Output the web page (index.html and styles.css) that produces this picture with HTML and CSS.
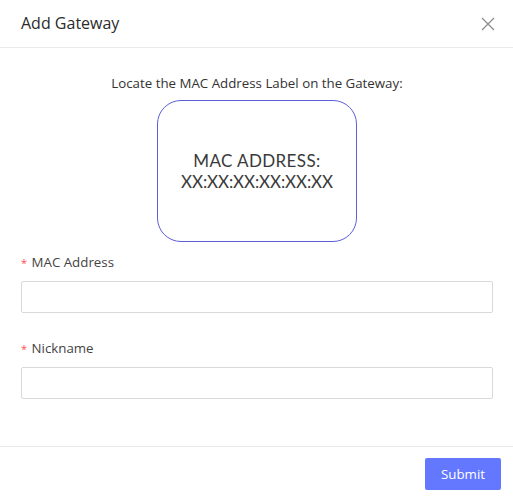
FILE: index.html
```html
<!DOCTYPE html>
<html lang="en">
<head>
    <meta charset="UTF-8">
    <meta name="viewport" content="width=device-width, initial-scale=1.0">
    <title>Add Gateway</title>
    <link rel="stylesheet" href="styles.css">
</head>
<body>

    <div class="modal">
        <div class="modal-header">
            <div class="modal-title">Add Gateway</div>
            <button class="close" aria-label="Close">
                <svg width="14" height="14" viewBox="0 0 14 14">
                    <path d="M1 1 L13 13 M13 1 L1 13" stroke="#888" stroke-width="1.1" fill="none"/>
                </svg>
            </button>
        </div>

        <div class="modal-body">
            <div class="hint">Locate the MAC Address Label on the Gateway:</div>
            <div class="mac-label">
                <div class="mac-title">MAC ADDRESS:</div>
                <div class="mac-value">XX:XX:XX:XX:XX:XX</div>
            </div>

            <div class="field">
                <label for="mac"><span class="req">*</span> MAC Address</label>
                <input type="text" id="mac">
            </div>
            <div class="field">
                <label for="nick"><span class="req">*</span> Nickname</label>
                <input type="text" id="nick">
            </div>
        </div>

        <div class="modal-footer">
            <button class="submit">Submit</button>
        </div>
    </div>

</body>
</html>
```

FILE: styles.css
```css
body {
    margin: 0;
    background-color: #fff;
    font-family: "Open Sans", "Noto Sans", sans-serif;
    color: #333;
}

.modal {
    width: 513px;
    height: 497px;
    display: flex;
    flex-direction: column;
    background-color: #fff;
}

.modal-header {
    height: 48px;
    box-sizing: border-box;
    border-bottom: 1px solid #eaeaea;
    padding: 0 18px 0 21px;
    display: flex;
    align-items: center;
    justify-content: space-between;
}

.modal-title {
    font-size: 16px;
    font-weight: 500;
    color: #2b2b2b;
    margin-top: -1px;
}

.close {
    border: none;
    background: none;
    padding: 0;
    width: 14px;
    height: 14px;
    cursor: pointer;
}

.modal-body {
    flex: 1;
    padding: 26px 20px 0 21px;
}

.hint {
    text-align: center;
    font-size: 13.3px;
    color: #333;
    line-height: 18px;
}

.mac-label {
    width: 200px;
    height: 142px;
    box-sizing: border-box;
    margin: 8px auto 0;
    border: 1.3px solid #5d5fd8;
    border-radius: 24px;
    display: flex;
    flex-direction: column;
    align-items: center;
    justify-content: center;
    font-family: Lato, "Noto Sans", sans-serif;
    font-size: 17px;
    color: #3a3a3a;
    line-height: 21px;
}

.mac-title {
    letter-spacing: 0.4px;
}

.mac-value {
    letter-spacing: -0.1px;
}

.field {
    margin-top: 11px;
}

.field + .field {
    margin-top: 26px;
}

.field label {
    display: block;
    font-size: 13.3px;
    color: #444;
    line-height: 18px;
    margin-bottom: 9px;
}

.req {
    color: #ff4d4f;
    font-size: 11px;
    margin-right: 1px;
}

.field input {
    display: block;
    width: 100%;
    height: 32px;
    box-sizing: border-box;
    border: 1px solid #d9d9d9;
    border-radius: 2px;
    outline: none;
    font-size: 13px;
    padding: 4px 10px;
}

.modal-footer {
    height: 50px;
    border-top: 1px solid #eaeaea;
    display: flex;
    justify-content: flex-end;
    align-items: center;
    padding-right: 12px;
}

.submit {
    width: 76px;
    height: 32px;
    border: none;
    border-radius: 2px;
    background-color: #6478ff;
    color: #fff;
    font-family: "Open Sans", "Noto Sans", sans-serif;
    font-size: 13.3px;
    cursor: pointer;
    margin-top: 3px;
}
```
